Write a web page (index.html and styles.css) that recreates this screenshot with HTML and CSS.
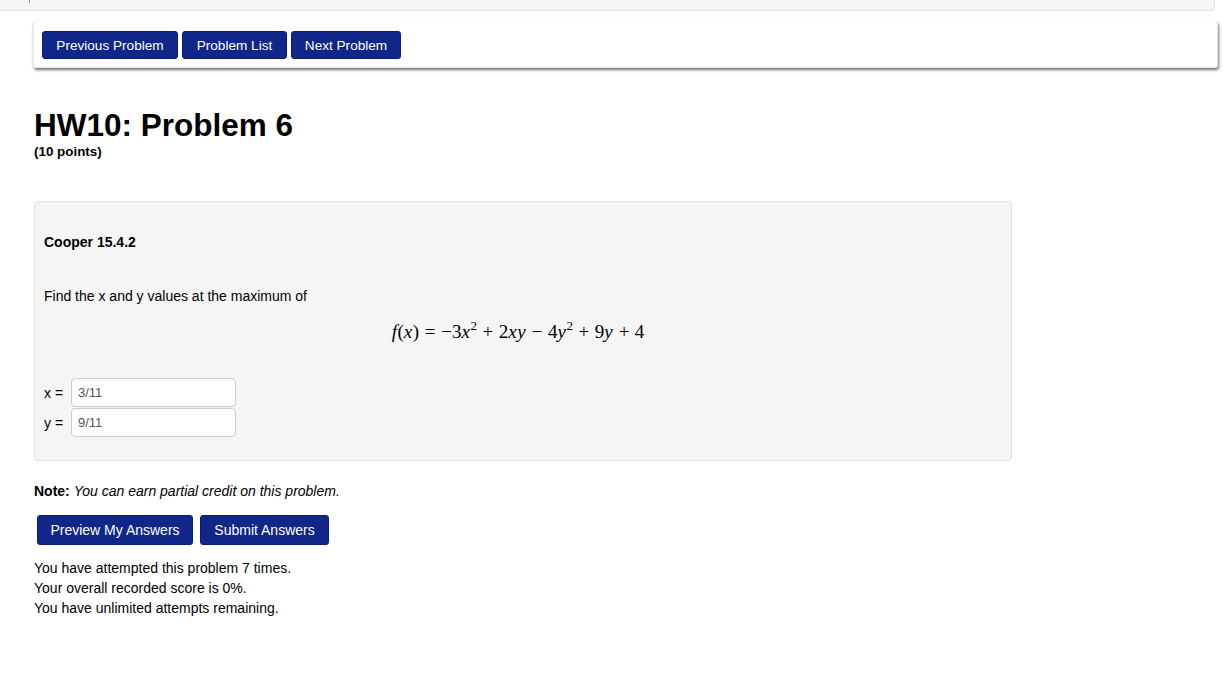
FILE: index.html
```html
<!DOCTYPE html>
<html>
<head>
<meta charset="utf-8">
<link rel="stylesheet" href="styles.css">
</head>
<body>
<div class="topbar"><span class="topmark"></span></div>
<div class="navcard">
  <button class="btn nav prev">Previous Problem</button>
  <button class="btn nav list">Problem List</button>
  <button class="btn nav next">Next Problem</button>
</div>
<main class="content">
  <h1 class="title">HW10: Problem 6</h1>
  <div class="points">(10 points)</div>
  <section class="problem">
    <div class="source">Cooper 15.4.2</div>
    <div class="prompt">Find the x and y values at the maximum of</div>
    <div class="math">
      <span class="mi">f</span><span class="mo">(</span><span class="mi">x</span><span class="mo">)</span><span class="rel">=</span><span class="mo">−</span>3<span class="mi">x</span><sup>2</sup><span class="bin">+</span>2<span class="mi">x</span><span class="mi">y</span><span class="bin">−</span>4<span class="mi">y</span><sup>2</sup><span class="bin">+</span>9<span class="mi">y</span><span class="bin">+</span>4
    </div>
    <div class="answers">
      <div class="ansrow"><label class="anslabel">x =</label><input class="ansinput" type="text" value="3/11"></div>
      <div class="ansrow"><label class="anslabel">y =</label><input class="ansinput" type="text" value="9/11"></div>
    </div>
  </section>
  <div class="note"><b>Note:</b> <i>You can earn partial credit on this problem.</i></div>
  <div class="actions">
    <button class="btn act preview">Preview My Answers</button>
    <button class="btn act submit">Submit Answers</button>
  </div>
  <div class="status">
    <div>You have attempted this problem 7 times.</div>
    <div>Your overall recorded score is 0%.</div>
    <div>You have unlimited attempts remaining.</div>
  </div>
</main>
</body>
</html>
```
FILE: styles.css
```css
html, body {
  margin: 0;
  padding: 0;
  background: #fff;
}
body {
  font-family: "Liberation Sans", Arial, sans-serif;
  font-size: 14px;
  color: #000;
}
.topbar {
  height: 10px;
  width: 1214px;
  background: #f5f5f5;
  border-right: 1px solid #e3e3e3;
  border-bottom: 1px solid #e3e3e3;
  border-bottom-right-radius: 4px;
  position: relative;
}
.topmark {
  position: absolute;
  left: 29px;
  top: 0;
  width: 1px;
  height: 3px;
  background: #7d95d6;
}
.navcard {
  margin: 10px 0 0 33px;
  width: 1175px;
  height: 28px;
  padding: 10px 0 8px 8px;
  background: #fff;
  border: 1px solid #e6e6e6;
  border-top: none;
  border-radius: 3px;
  box-shadow: 1px 2px 3px rgba(0,0,0,0.55);
  display: flex;
  gap: 4px;
  box-sizing: content-box;
}
.btn {
  font-family: "Liberation Sans", Arial, sans-serif;
  color: #fff;
  background: #102689;
  border: 1px solid #0b1d6e;
  border-radius: 3px;
  cursor: pointer;
  margin: 0;
  padding: 0;
  white-space: nowrap;
}
.btn.nav {
  height: 28px;
  font-size: 13.6px;
}
.btn.prev { width: 136px; }
.btn.list { width: 105px; }
.btn.next { width: 110px; }
.content {
  margin-left: 34px;
}
.title {
  font-size: 31.5px;
  line-height: 34px;
  font-weight: bold;
  margin: 40px 0 0;
}
.points {
  font-weight: bold;
  font-size: 13.4px;
  line-height: 18px;
  margin-top: 1px;
}
.problem {
  margin-top: 40px;
  width: 957px;
  background: #f5f5f5;
  border: 1px solid #e3e3e3;
  border-radius: 4px;
  padding: 31px 10px 23px 9px;
}
.source {
  font-weight: bold;
  line-height: 18px;
}
.prompt {
  line-height: 18px;
  margin-top: 36px;
}
.math {
  margin-top: 15px;
  height: 24px;
  line-height: 24px;
  text-align: center;
  font-family: "Liberation Serif", "Times New Roman", serif;
  font-size: 19px;
  padding-right: 9px;
}
.math .mi {
  font-style: italic;
  padding-right: 0.03em;
}
.math .bin {
  padding: 0 0.29em;
}
.math .rel {
  padding: 0 0.3em;
}
.math sup {
  font-size: 13px;
  vertical-align: 0;
  position: relative;
  top: -8px;
  line-height: 0;
}
.answers {
  margin-top: 34px;
  display: flex;
  flex-direction: column;
  gap: 1px;
}
.ansrow {
  display: flex;
  align-items: center;
  height: 29px;
}
.anslabel {
  width: 27px;
  font-size: 14px;
  white-space: nowrap;
}
.ansinput {
  width: 165px;
  height: 29px;
  box-sizing: border-box;
  border: 1px solid #cccccc;
  border-radius: 4px;
  background: #fff;
  padding: 0 6px;
  font-family: "Liberation Sans", Arial, sans-serif;
  font-size: 13px;
  color: #555;
  margin: 0;
}
.note {
  margin-top: 21px;
  line-height: 18px;
}
.actions {
  margin: 15px 0 0 3px;
  display: flex;
  gap: 7px;
}
.btn.act {
  height: 30px;
  font-size: 14px;
}
.btn.preview {
  width: 156px;
}
.btn.submit {
  width: 129px;
}
.status {
  margin-top: 13px;
  line-height: 20px;
}
```
